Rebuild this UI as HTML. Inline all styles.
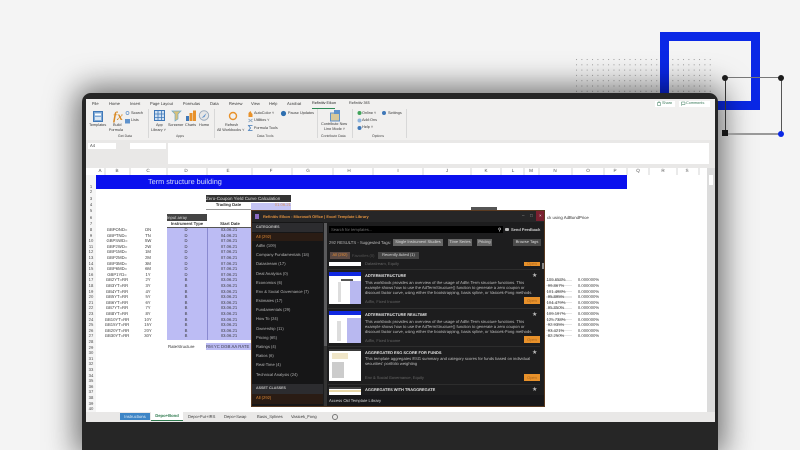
<!DOCTYPE html>
<html><head><meta charset="utf-8">
<style>
html,body{margin:0;padding:0;background:#f4f4f4;overflow:hidden;width:800px;height:450px}
body{position:relative;font-family:"Liberation Sans",sans-serif;text-rendering:geometricPrecision}
div,span{position:absolute;white-space:nowrap}
.k{background:#1c1c1c;border-radius:50%;width:6px;height:6px}
#lap{left:82px;top:93px;width:636px;height:357px;background:#262626;border-radius:9px 9px 0 0;box-shadow:0 0 30px 6px rgba(0,0,0,.55)}
#scr{left:86px;top:99px;width:629px;height:323px;background:#fff;filter:blur(.35px);overflow:hidden}
#scr div,#scr span{line-height:1}
.t{font-size:4.1px;color:#3a3a3a}
.l{font-size:3.8px;color:#3a3a3a}
.s{font-size:3.5px;color:#484848;top:36px}
.c{transform:translateX(-50%)}
.h{font-size:4.6px;color:#555;top:69.5px}
.r{font-size:4.2px;color:#444;left:0;width:10px;text-align:center}
.g{font-size:4.2px;color:#333;transform:translateX(-50%)}
.cat{left:4px;font-size:4.1px;color:#b0b0b0}
.ttl{font-size:3.95px;font-weight:bold;color:#e2e2e2;left:37px}
.tg{font-size:4px;color:#666;left:37px}
.d{font-size:4.1px;color:#bcbcbc;left:37px;line-height:5.35px!important}
.op{left:196px;width:16px;height:7px;background:#e8912a;font-size:4px;color:#a9651d;text-align:center;line-height:7px!important}
.tag{background:#666;color:#dcdcdc;font-size:4px;height:6.500px;line-height:6.500px!important;text-align:center}
.st{left:204px;font-size:6px;color:#bbb}
.sep{background:#d8d8d8;width:1px;top:10px;height:29px}
</style></head>
<body>
<svg style="position:absolute;left:0;top:0" width="800" height="450">
<defs><pattern id="d" x="576" y="59" width="5.35" height="5.3" patternUnits="userSpaceOnUse"><rect x="0" y="0" width="1" height="1" fill="#a0a0a0"/></pattern></defs>
<rect x="576" y="59" width="135" height="36" fill="url(#d)"/>
</svg>
<div style="left:660px;top:32px;width:82px;height:60px;border:9px solid #0a28e6"></div>
<div id="lap"></div>
<div style="left:725px;top:77px;width:56px;height:1px;background:#777"></div>
<div style="left:725px;top:77px;width:1px;height:56px;background:#333"></div>
<div style="left:781px;top:77px;width:1px;height:56px;background:#555"></div>
<div style="left:725px;top:133px;width:56px;height:2px;background:#999"></div>
<div class="k" style="left:722px;top:75px"></div>
<div class="k" style="left:778px;top:75px"></div>
<div style="left:722px;top:130px;width:6px;height:6px;background:#151515"></div>
<div class="k" style="left:778px;top:131px;background:#0a28e6"></div>

<div id="scr">
 <div style="left:0;top:0;width:629px;height:41px;background:#f1f0ef"></div>
 <div style="left:0;top:41px;width:629px;height:28px;background:#e9e8e7"></div>
 <div style="left:82px;top:44px;width:541px;height:21px;background:#fff"></div>
 <div style="left:2px;top:44px;width:28px;height:6px;background:#fff"></div>
 <div style="left:44px;top:44px;width:36px;height:6px;background:#fff"></div>
 <div class="t" style="left:4px;top:45px">A4</div>
 <div class="t" style="left:6px;top:2.700px">File</div>
 <div class="t" style="left:23px;top:2.700px">Home</div>
 <div class="t" style="left:44px;top:2.700px">Insert</div>
 <div class="t" style="left:64px;top:2.700px">Page Layout</div>
 <div class="t" style="left:97px;top:2.700px">Formulas</div>
 <div class="t" style="left:124px;top:2.700px">Data</div>
 <div class="t" style="left:143px;top:2.700px">Review</div>
 <div class="t" style="left:165px;top:2.700px">View</div>
 <div class="t" style="left:183px;top:2.700px">Help</div>
 <div class="t" style="left:201px;top:2.700px">Acrobat</div>
 <div class="t" style="left:226px;top:2.700px;color:#222;font-size:3.800px">Refinitiv Eikon</div>
 <div style="left:226px;top:9px;width:23px;height:1px;background:#2e8b57"></div>
 <div class="t" style="left:263px;top:2.700px;font-size:3.800px">Refinitiv 365</div>
 <div style="left:569px;top:2px;width:20px;height:6px;background:#fff"></div>
 <div style="left:593px;top:2px;width:31px;height:6px;background:#fff"></div>
 <div class="l" style="left:576px;top:3px;color:#3b7a5a">Share</div>
 <div class="l" style="left:600px;top:3px;color:#3b7a5a">Comments</div>
 <svg style="position:absolute;left:0;top:0" width="629" height="41">
  <path d="M571.500 3.500h3v3h-3zM572 3.500l1-1 1 1" fill="none" stroke="#3b7a5a" stroke-width=".5"/>
  <path d="M595.500 3h3.500v2.500h-2.500l-1 1z" fill="none" stroke="#3b7a5a" stroke-width=".5"/>
  <rect x="7.500" y="12.500" width="9" height="10" fill="#7fa9d6" stroke="#3f78b8"/><rect x="9" y="14.500" width="6" height="2" fill="#fff"/><rect x="9" y="18" width="6" height="3" fill="#dce8f4"/>
  <circle cx="41.500" cy="14" r="1.500" fill="none" stroke="#5f92cc" stroke-width=".7"/>
  <rect x="39" y="20" width="5" height="4.500" fill="#5f92cc"/>
  <rect x="68.500" y="11.500" width="10" height="10" fill="#cfe0f2" stroke="#3f78b8"/><path d="M68.500 15h10M68.500 18.500h10M72 11.500v10M75.500 11.500v10" stroke="#3f78b8" stroke-width=".8"/>
  <path d="M86 12h9l-3 3v5l-3 2v-7z" fill="#d9c27a" stroke="#6fa8c7" stroke-width=".7"/>
  <rect x="100" y="17" width="3" height="5" fill="#3f78b8"/><rect x="103.500" y="14" width="3" height="8" fill="#e8912a"/><rect x="107" y="11.500" width="3" height="10.500" fill="#e8912a"/>
  <circle cx="118" cy="16.500" r="4.700" fill="#e6e6e6" stroke="#9aaabb"/><path d="M115.500 19l5-5-2 4z" fill="#5f92cc"/>
  <circle cx="147" cy="17" r="3.500" fill="none" stroke="#e8912a" stroke-width="1.400"/>
  <path d="M162.500 14l2-2 1 2 1 1v3h-4z" fill="#e8912a"/>
  <path d="M162.500 20l4 3M166.500 20l-4 3" stroke="#8fa8c0" stroke-width=".8"/>
  <path d="M166.500 26.500h-4l2 2.500-2 2.500h4" fill="none" stroke="#3f78b8" stroke-width=".8"/>
  <circle cx="197.500" cy="14.500" r="2.600" fill="#2f6fb0"/>
  <rect x="244.500" y="14" width="9" height="8" fill="#d8c89a" stroke="#5f92cc"/><rect x="248" y="11" width="6" height="4" fill="#5f92cc"/>
  <circle cx="273.500" cy="14" r="2" fill="#3fa35a"/><circle cx="273.500" cy="21.500" r="2" fill="#8fb4dc"/><circle cx="273.500" cy="29" r="2" fill="#3f78b8"/><circle cx="298" cy="14" r="2" fill="#3f78b8"/>
 </svg>
 <div style="left:27px;top:10px;font:italic bold 12px 'Liberation Serif',serif;color:#d98a25">fx</div>
 <div class="l" style="left:3px;top:24.500px">Templates</div>
 <div class="l" style="left:27px;top:24.500px">Build</div>
 <div class="l" style="left:23px;top:29.500px">Formula</div>
 <div class="l" style="left:45px;top:12.500px">Search</div>
 <div class="l" style="left:45px;top:20px">Lists</div>
 <div class="s" style="left:32px">Get Data</div>
 <div class="sep" style="left:62px"></div>
 <div class="l" style="left:70px;top:24.500px">App</div>
 <div class="l" style="left:65px;top:29.500px">Library ˅</div>
 <div class="l" style="left:82px;top:24.500px">Screener</div>
 <div class="l" style="left:99px;top:24.500px">Charts</div>
 <div class="l" style="left:113px;top:24.500px">Home</div>
 <div class="s" style="left:90px">Apps</div>
 <div class="sep" style="left:128px"></div>
 <div class="l" style="left:139px;top:24.500px">Refresh</div>
 <div class="l" style="left:131px;top:29.500px">All Workbooks ˅</div>
 <div class="l" style="left:168px;top:12.500px">AutoColor ˅</div>
 <div class="l" style="left:168px;top:20px">Utilities ˅</div>
 <div class="l" style="left:168px;top:28px">Formula Tools</div>
 <div class="l" style="left:202px;top:12.500px">Pause Updates</div>
 <div class="s" style="left:171px">Data Tools</div>
 <div class="sep" style="left:231px"></div>
 <div class="l" style="left:235px;top:23.500px">Contribute New</div>
 <div class="l" style="left:238px;top:29px">Line Mode ˅</div>
 <div class="s" style="left:235px">Contribute Data</div>
 <div class="sep" style="left:266px"></div>
 <div class="l" style="left:276px;top:12.500px">Online ˅</div>
 <div class="l" style="left:302px;top:12.500px">Settings</div>
 <div class="l" style="left:276px;top:20px">Add-Ons</div>
 <div class="l" style="left:276px;top:27px">Help ˅</div>
 <div class="s" style="left:286px">Options</div>
 <div class="sep" style="left:320px"></div>
 <div class="h c" style="left:14px">A</div><div class="h c" style="left:31px">B</div><div class="h c" style="left:62px">C</div><div class="h c" style="left:100px">D</div><div class="h c" style="left:142px">E</div><div class="h c" style="left:185px">F</div><div class="h c" style="left:222px">G</div><div class="h c" style="left:263px">H</div><div class="h c" style="left:312px">I</div><div class="h c" style="left:361px">J</div><div class="h c" style="left:400px">K</div><div class="h c" style="left:427px">L</div><div class="h c" style="left:445px">M</div><div class="h c" style="left:469px">N</div><div class="h c" style="left:502px">O</div><div class="h c" style="left:529px">P</div><div class="h c" style="left:552px">Q</div><div class="h c" style="left:577px">R</div><div class="h c" style="left:601px">S</div>
 <svg style="position:absolute;left:0;top:68px" width="629" height="8"><path d="M19 1v7M44 1v7M81 1v7M121 1v7M166 1v7M206 1v7M247 1v7M287 1v7M337 1v7M385 1v7M415 1v7M438 1v7M453 1v7M486 1v7M518 1v7M541 1v7M563 1v7M591 1v7M613 1v7" stroke="#c4c4c4" stroke-width=".7"/></svg>
 <div style="left:0;top:76px;width:10px;height:237px;background:#f5f5f5"></div>
 <div style="left:10px;top:76px;width:531px;height:14px;background:#0a10ee"></div>
 <div style="left:62px;top:79.400px;font-size:7.300px;color:#d5def8">Term structure building</div>
 <div class="r" style="top:86px">1</div><div class="r" style="top:91px">2</div><div class="r" style="top:98px">3</div><div class="r" style="top:104px">4</div><div class="r" style="top:110px">5</div><div class="r" style="top:117px">6</div><div class="r" style="top:123px">7</div><div class="r" style="top:129px">8</div><div class="r" style="top:134.600px">9</div><div class="r" style="top:140.200px">10</div><div class="r" style="top:145.800px">11</div><div class="r" style="top:151.400px">12</div><div class="r" style="top:157px">13</div><div class="r" style="top:162.600px">14</div><div class="r" style="top:168.200px">15</div><div class="r" style="top:173.800px">16</div><div class="r" style="top:179.400px">17</div><div class="r" style="top:185px">18</div><div class="r" style="top:190.600px">19</div><div class="r" style="top:196.200px">20</div><div class="r" style="top:201.800px">21</div><div class="r" style="top:207.400px">22</div><div class="r" style="top:213px">23</div><div class="r" style="top:218.600px">24</div><div class="r" style="top:224.200px">25</div><div class="r" style="top:229.800px">26</div><div class="r" style="top:235.400px">27</div><div class="r" style="top:241px">28</div><div class="r" style="top:246.600px">29</div><div class="r" style="top:252.200px">30</div><div class="r" style="top:257.800px">31</div><div class="r" style="top:263.400px">32</div><div class="r" style="top:269px">33</div><div class="r" style="top:274.600px">34</div><div class="r" style="top:280.200px">35</div><div class="r" style="top:285.800px">36</div><div class="r" style="top:291.400px">37</div><div class="r" style="top:297px">38</div><div class="r" style="top:302.600px">39</div><div class="r" style="top:308.200px">40</div>
 <div style="left:120px;top:96px;width:85px;height:7px;background:#333;color:#ddd;font-size:4.500px;line-height:7px">Zero-Coupon Yield Curve Calculation</div>
 <div style="left:120px;top:104px;width:45px;height:6px;font-size:4.2px;font-weight:bold;color:#333;text-align:center;border-bottom:1px solid #999">Trading Date</div>
 <div style="left:165px;top:104px;width:40px;height:7px;background:#c4c4f4;color:#d8925a;font-size:4.2px;text-align:right">01.06.21</div>
 <div style="left:81px;top:115px;width:40px;height:7px;background:#444;color:#ddd;font-size:4.2px;line-height:7px">Input array</div>
 <div class="g" style="left:101px;top:123px;font-weight:bold">Instrument Type</div>
 <div class="g" style="left:144px;top:123px;font-weight:bold">Start Date</div>
 <div style="left:81px;top:128px;width:84px;height:1px;background:#555"></div>
 <div style="left:81px;top:129px;width:84px;height:111.500px;background:#bcbcf4"></div>
 <div style="left:120.500px;top:129px;width:.6px;height:111.500px;background:#8a8ad0"></div>
 <div class="g" style="left:31px;top:129px">GBPOND=</div><div class="g" style="left:31px;top:134.600px">GBPTND=</div><div class="g" style="left:31px;top:140.200px">GBPSWD=</div><div class="g" style="left:31px;top:145.800px">GBP2WD=</div><div class="g" style="left:31px;top:151.400px">GBP1MD=</div><div class="g" style="left:31px;top:157px">GBP2MD=</div><div class="g" style="left:31px;top:162.600px">GBP3MD=</div><div class="g" style="left:31px;top:168.200px">GBP6MD=</div><div class="g" style="left:31px;top:173.800px">GBP1YD=</div><div class="g" style="left:31px;top:179.400px">GB2YT=RR</div><div class="g" style="left:31px;top:185px">GB3YT=RR</div><div class="g" style="left:31px;top:190.600px">GB4YT=RR</div><div class="g" style="left:31px;top:196.200px">GB5YT=RR</div><div class="g" style="left:31px;top:201.800px">GB6YT=RR</div><div class="g" style="left:31px;top:207.400px">GB7YT=RR</div><div class="g" style="left:31px;top:213px">GB8YT=RR</div><div class="g" style="left:31px;top:218.600px">GB10YT=RR</div><div class="g" style="left:31px;top:224.200px">GB15YT=RR</div><div class="g" style="left:31px;top:229.800px">GB20YT=RR</div><div class="g" style="left:31px;top:235.400px">GB30YT=RR</div>
 <div class="g" style="left:62px;top:129px">ON</div><div class="g" style="left:62px;top:134.600px">TN</div><div class="g" style="left:62px;top:140.200px">SW</div><div class="g" style="left:62px;top:145.800px">2W</div><div class="g" style="left:62px;top:151.400px">1M</div><div class="g" style="left:62px;top:157px">2M</div><div class="g" style="left:62px;top:162.600px">3M</div><div class="g" style="left:62px;top:168.200px">6M</div><div class="g" style="left:62px;top:173.800px">1Y</div><div class="g" style="left:62px;top:179.400px">2Y</div><div class="g" style="left:62px;top:185px">3Y</div><div class="g" style="left:62px;top:190.600px">4Y</div><div class="g" style="left:62px;top:196.200px">5Y</div><div class="g" style="left:62px;top:201.800px">6Y</div><div class="g" style="left:62px;top:207.400px">7Y</div><div class="g" style="left:62px;top:213px">8Y</div><div class="g" style="left:62px;top:218.600px">10Y</div><div class="g" style="left:62px;top:224.200px">15Y</div><div class="g" style="left:62px;top:229.800px">20Y</div><div class="g" style="left:62px;top:235.400px">30Y</div>
 <div class="g" style="left:100px;top:129px">D</div><div class="g" style="left:100px;top:134.600px">D</div><div class="g" style="left:100px;top:140.200px">D</div><div class="g" style="left:100px;top:145.800px">D</div><div class="g" style="left:100px;top:151.400px">D</div><div class="g" style="left:100px;top:157px">D</div><div class="g" style="left:100px;top:162.600px">D</div><div class="g" style="left:100px;top:168.200px">D</div><div class="g" style="left:100px;top:173.800px">D</div><div class="g" style="left:100px;top:179.400px">B</div><div class="g" style="left:100px;top:185px">B</div><div class="g" style="left:100px;top:190.600px">B</div><div class="g" style="left:100px;top:196.200px">B</div><div class="g" style="left:100px;top:201.800px">B</div><div class="g" style="left:100px;top:207.400px">B</div><div class="g" style="left:100px;top:213px">B</div><div class="g" style="left:100px;top:218.600px">B</div><div class="g" style="left:100px;top:224.200px">B</div><div class="g" style="left:100px;top:229.800px">B</div><div class="g" style="left:100px;top:235.400px">B</div>
 <div class="g" style="left:143px;top:129px">03.06.21</div><div class="g" style="left:143px;top:134.600px">04.06.21</div><div class="g" style="left:143px;top:140.200px">07.06.21</div><div class="g" style="left:143px;top:145.800px">07.06.21</div><div class="g" style="left:143px;top:151.400px">07.06.21</div><div class="g" style="left:143px;top:157px">07.06.21</div><div class="g" style="left:143px;top:162.600px">07.06.21</div><div class="g" style="left:143px;top:168.200px">07.06.21</div><div class="g" style="left:143px;top:173.800px">07.06.21</div><div class="g" style="left:143px;top:179.400px">03.06.21</div><div class="g" style="left:143px;top:185px">03.06.21</div><div class="g" style="left:143px;top:190.600px">03.06.21</div><div class="g" style="left:143px;top:196.200px">03.06.21</div><div class="g" style="left:143px;top:201.800px">03.06.21</div><div class="g" style="left:143px;top:207.400px">03.06.21</div><div class="g" style="left:143px;top:213px">03.06.21</div><div class="g" style="left:143px;top:218.600px">03.06.21</div><div class="g" style="left:143px;top:224.200px">03.06.21</div><div class="g" style="left:143px;top:229.800px">03.06.21</div><div class="g" style="left:143px;top:235.400px">03.06.21</div>
 <div class="t" style="left:82px;top:246px;font-size:4.3px">RateStructure</div>
 <div style="left:120px;top:244px;width:46px;height:7px;background:#bcbcf4;color:#445;font-size:4.3px;line-height:7px">RM:YC DGB:AA RATE</div>
 <div style="left:385px;top:108px;width:26px;height:4px;background:#555"></div>
 <div class="t" style="left:461px;top:117px;font-size:4.3px">ck using AdBondPrice</div>
 <div style="left:460px;top:176px;width:26px;height:61px;background:repeating-linear-gradient(#fff 0,#fff 5px,#ccc 5px,#ccc 5.570px)"></div>
 <div class="g" style="left:470px;top:179.400px">109.658%</div><div class="g" style="left:470px;top:185px">99.867%</div><div class="g" style="left:470px;top:190.600px">101.498%</div><div class="g" style="left:470px;top:196.200px">95.895%</div><div class="g" style="left:470px;top:201.800px">104.479%</div><div class="g" style="left:470px;top:207.400px">95.850%</div><div class="g" style="left:470px;top:213px">109.197%</div><div class="g" style="left:470px;top:218.600px">125.738%</div><div class="g" style="left:470px;top:224.200px">92.935%</div><div class="g" style="left:470px;top:229.800px">93.421%</div><div class="g" style="left:470px;top:235.400px">82.250%</div>
 <div class="g" style="left:502.500px;top:179.400px">0.000000%</div><div class="g" style="left:502.500px;top:185px">0.000000%</div><div class="g" style="left:502.500px;top:190.600px">0.000000%</div><div class="g" style="left:502.500px;top:196.200px">0.000000%</div><div class="g" style="left:502.500px;top:201.800px">0.000000%</div><div class="g" style="left:502.500px;top:207.400px">0.000000%</div><div class="g" style="left:502.500px;top:213px">0.000000%</div><div class="g" style="left:502.500px;top:218.600px">0.000000%</div><div class="g" style="left:502.500px;top:224.200px">0.000000%</div><div class="g" style="left:502.500px;top:229.800px">0.000000%</div><div class="g" style="left:502.500px;top:235.400px">0.000000%</div>
 <div style="left:621px;top:69px;width:8px;height:244px;background:#dcdcdc"></div>
 <div style="left:623px;top:76px;width:4px;height:10px;background:#fff"></div>
 <div style="left:0;top:313px;width:629px;height:10px;background:#e9e8e7"></div>
 <div style="left:34px;top:314px;width:30px;height:7px;background:#3d85c6;color:#dfeaf5;font-size:4.200px;line-height:7px;text-align:center">Instructions</div>
 <div style="left:65px;top:313px;width:32px;height:7.500px;background:#fff;color:#2f7a4f;font-size:4.200px;font-weight:bold;line-height:8px;text-align:center;border-bottom:1px solid #2f7a4f">Depo+Bond</div>
 <div class="t" style="left:102px;top:315.500px">Depo+Fut+IRS</div>
 <div class="t" style="left:138px;top:315.500px">Depo+Swap</div>
 <div class="t" style="left:171px;top:315.500px">Basis_Splines</div>
 <div class="t" style="left:205px;top:315.500px">Vasicek_Fong</div>
 <div style="left:246px;top:315px;width:4px;height:4px;border:.7px solid #777;border-radius:50%"></div>

 <div style="left:165px;top:111px;width:293.500px;height:197px;background:#1d1d1e;border:.6px solid #5a3a20;box-sizing:border-box;overflow:hidden">
  <div style="left:0;top:0;width:294px;height:11px;background:#262627"></div>
  <div style="left:2.500px;top:3px;width:4px;height:5px;background:#8a6ac0"></div>
  <div style="left:11px;top:3.500px;font-size:3.900px;font-weight:bold;color:#e0913f">Refinitiv Eikon - Microsoft Office | Excel Template Library</div>
  <div style="left:284px;top:0;width:9px;height:10px;background:#7a2030"></div>
  <div style="left:287px;top:3px;font-size:4.500px;color:#ddd">×</div>
  <div style="left:270px;top:3px;font-size:4.500px;color:#aaa">–</div>
  <div style="left:278px;top:3px;font-size:4.500px;color:#aaa">□</div>
  <div style="left:0;top:11px;width:71px;height:186px;background:#161617"></div>
  <div style="left:0;top:12px;width:71px;height:9px;background:#2c2c2f"></div>
  <div style="left:4px;top:14.500px;font-size:3.600px;font-weight:bold;color:#c0c0c0">CATEGORIES</div>
  <div style="left:0;top:22px;width:71px;height:8px;background:#2a1c14"></div>
  <div class="cat" style="top:23.700px;color:#e08a35">All (292)</div>
  <div class="cat" style="top:33px">Adfin (109)</div>
  <div class="cat" style="top:42.300px">Company Fundamentals (18)</div>
  <div class="cat" style="top:51.300px">Datastream (17)</div>
  <div class="cat" style="top:60.700px">Deal Analytics (0)</div>
  <div class="cat" style="top:69.700px">Economics (6)</div>
  <div class="cat" style="top:79px">Env &amp; Social Governance (7)</div>
  <div class="cat" style="top:88px">Estimates (17)</div>
  <div class="cat" style="top:97.300px">Fundamentals (29)</div>
  <div class="cat" style="top:106.300px">How To (24)</div>
  <div class="cat" style="top:115.700px">Ownership (11)</div>
  <div class="cat" style="top:124.700px">Pricing (65)</div>
  <div class="cat" style="top:134px">Ratings (4)</div>
  <div class="cat" style="top:143px">Ratios (6)</div>
  <div class="cat" style="top:152.300px">Real-Time (4)</div>
  <div class="cat" style="top:161.700px">Technical Analysis (24)</div>
  <div style="left:0;top:173px;width:71px;height:10px;background:#2c2c2f"></div>
  <div style="left:4px;top:176px;font-size:3.600px;font-weight:bold;color:#c0c0c0">ASSET CLASSES</div>
  <div style="left:0;top:183px;width:71px;height:10px;background:#2a1c14"></div>
  <div class="cat" style="top:185.300px;color:#e08a35">All (292)</div>
  <div style="left:72px;top:12px;width:2.500px;height:123px;background:#5a5a5c"></div>
  <div style="left:72px;top:135px;width:2.500px;height:62px;background:#333"></div>
  <div style="left:77px;top:15px;width:174px;height:7px;background:#000"></div>
  <div style="left:79px;top:16.800px;font-size:4.100px;color:#707070">Search for templates...</div>
  <div style="left:246px;top:16.500px;font-size:4.500px;color:#ccc;font-weight:bold">⚲</div>
  <div style="left:253px;top:16.500px;width:4px;height:3px;background:#bbb;border-radius:1px"></div>
  <div style="left:259px;top:16.800px;font-size:4px;color:#d0d0d0;font-weight:bold">Send Feedback</div>
  <div style="left:77px;top:30.300px;font-size:4.200px;color:#bcbcbc">292 RESULTS - Suggested Tags:</div>
  <div class="tag" style="left:141px;top:28px;width:50px">Single Instrument Studies</div>
  <div class="tag" style="left:196px;top:28px;width:24px">Time Series</div>
  <div class="tag" style="left:225px;top:28px;width:15px">Pricing</div>
  <div class="tag" style="left:261px;top:28px;width:28px;background:#4a4a4a">Browse Tags</div>
  <div class="tag" style="left:78px;top:41px;width:20px;background:#5c4a44;color:#e08a35">All (292)</div>
  <div style="left:100px;top:42.500px;font-size:4px;color:#555">Favorites (0)</div>
  <div class="tag" style="left:126px;top:41px;width:41px;background:#444">Recently Acted (1)</div>
  <div style="left:76px;top:51px;width:216px;height:133px;overflow:hidden">
   <div style="left:1px;top:0;width:32px;height:4px;background:#fff"></div>
   <div class="tg" style="top:0">Datastream, Equity</div>
   <div class="op" style="top:-2px;height:6px">Open</div>
   <div style="left:0;top:6.500px;width:212px;height:.6px;background:#2d2d2d"></div>
   <div style="left:1px;top:10px;width:32px;height:32px;background:#fff;overflow:hidden">
    <div style="left:0;top:0;width:32px;height:4px;background:#1028e0"></div>
    <div style="left:12px;top:7px;width:12px;height:2px;background:#555"></div>
    <div style="left:21px;top:9px;width:11px;height:23px;background:#b8b8f0"></div>
    <div style="left:9px;top:10px;width:3px;height:20px;background:#ddd"></div>
   </div>
   <div class="ttl" style="top:12.300px">ADTERMSTRUCTURE</div>
   <div class="d" style="top:17.600px">This workbook provides an overview of the usage of Adfin Term structure functions. This<br>example shows how to use the AdTermStructure() function to generate a zero coupon or<br>discount factor curve, using either the bootstrapping, basis spline, or Vasicek-Fong methods.</div>
   <div class="tg" style="top:37.700px">Adfin, Fixed Income</div>
   <div class="op" style="top:35px">Open</div>
   <div class="st" style="top:11px">★</div>
   <div style="left:0;top:46px;width:212px;height:.6px;background:#2d2d2d"></div>
   <div style="left:1px;top:49px;width:32px;height:32px;background:#fff;overflow:hidden">
    <div style="left:0;top:0;width:32px;height:4px;background:#1028e0"></div>
    <div style="left:18px;top:7px;width:14px;height:25px;background:#b8b8f0"></div>
    <div style="left:8px;top:10px;width:4px;height:20px;background:#ddd"></div>
   </div>
   <div class="ttl" style="top:51px">ADTERMSTRUCTURE REALTIME</div>
   <div class="d" style="top:56.600px">This workbook provides an overview of the usage of Adfin Term structure functions. This<br>example shows how to use the AdTermStructure() function to generate a zero coupon or<br>discount factor curve, using either the bootstrapping, basis spline, or Vasicek-Fong methods.</div>
   <div class="tg" style="top:76.700px">Adfin, Fixed Income</div>
   <div class="op" style="top:74px">Open</div>
   <div class="st" style="top:50px">★</div>
   <div style="left:0;top:84px;width:212px;height:.6px;background:#2d2d2d"></div>
   <div style="left:1px;top:87px;width:32px;height:32px;background:#fff;overflow:hidden">
    <div style="left:0;top:0;width:32px;height:2px;background:#3a3a3a"></div>
    <div style="left:3px;top:4px;width:16px;height:6px;background:#f0e6c8"></div>
    <div style="left:3px;top:13px;width:12px;height:16px;background:#ccc"></div>
   </div>
   <div class="ttl" style="top:88.700px">AGGREGATED ESG SCORE FOR FUNDS</div>
   <div class="d" style="top:94px">This template aggregates ESG summary and category scores for funds based on individual<br>securities' portfolio weighting</div>
   <div class="tg" style="top:114.300px">Env &amp; Social Governance, Equity</div>
   <div class="op" style="top:112px">Open</div>
   <div class="st" style="top:88px">★</div>
   <div style="left:0;top:122px;width:212px;height:.6px;background:#2d2d2d"></div>
   <div style="left:1px;top:125px;width:32px;height:10px;background:#fff"><div style="left:0;top:0;width:32px;height:2px;background:#444"></div><div style="left:0;top:3px;width:32px;height:2px;background:#e8d8a8"></div></div>
   <div class="ttl" style="top:126.300px">AGGREGATES WITH TRAGGREGATE</div>
   <div class="st" style="top:125px">★</div>
  </div>
  <div style="left:74.500px;top:184px;width:220px;height:13px;background:#18181a"></div>
  <div style="left:77px;top:188px;font-size:4.100px;color:#d0d0d0">Access Old Template Library</div>
  <div style="left:290px;top:52px;width:2.500px;height:6px;background:#888"></div>
 </div>
</div>
</body></html>
